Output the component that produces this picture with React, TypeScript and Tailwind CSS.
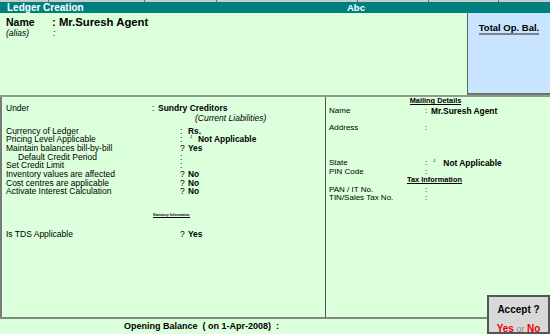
import React from "react";

const font = "font-['Liberation_Sans',Arial,sans-serif]";

function Row({ label, mark, value, indent }: { label: string; mark?: string; value?: React.ReactNode; indent?: boolean }) {
  return (
    <div className="flex h-[8.7px] items-center leading-none">
      <span className={`w-[174px] shrink-0 ${indent ? "pl-[12px]" : ""}`}>{label}</span>
      <span className="w-[8px] shrink-0">{mark}</span>
      {value && <span className="font-bold text-[8.4px]">{value}</span>}
    </div>
  );
}

function RightRow({ label, value, mark = ":", className = "" }: { label: string; value?: React.ReactNode; mark?: string; className?: string }) {
  return (
    <div className={`flex h-[8.4px] items-center leading-none ${className}`}>
      <span className="w-[96px] shrink-0">{label}</span>
      <span className="w-[6px] shrink-0">{mark}</span>
      {value && <span className="font-bold text-[8.4px]">{value}</span>}
    </div>
  );
}

function Hook({ children }: { children: React.ReactNode }) {
  return (
    <>
      <span className="inline-block w-[10px] pl-[2px] text-[6px] font-normal align-top">ᴶ</span>
      {children}
    </>
  );
}

export default function App() {
  const ticks = [48, 144, 216, 357, 428, 498];
  return (
    <div className={`relative h-[334px] w-[550px] overflow-hidden bg-[#dcffdc] text-black ${font}`}>
      {/* window strip */}
      <div className="relative h-[2px] bg-[#c8ccc8]">
        {ticks.map((x) => (
          <div key={x} className="absolute top-0 h-[2px] w-px bg-[#707070]" style={{ left: x }} />
        ))}
      </div>

      {/* title bar */}
      <div className="flex h-[11px] items-center bg-[#007f7f] text-[10px] font-bold leading-none text-white">
        <span className="w-[347px] shrink-0 pl-[7px]">Ledger Creation</span>
        <span className="text-[9.5px]">Abc</span>
      </div>

      {/* header section */}
      <div className="flex h-[82px]">
        <div className="flex-1 pl-[6px] pt-[4px]">
          <div className="flex h-[11px] items-center font-bold leading-none">
            <span className="w-[46px] text-[10.5px]">Name</span>
            <span className="text-[11.3px]">: Mr.Suresh Agent</span>
          </div>
          <div className="flex h-[11px] items-center text-[8.5px] italic leading-none">
            <span className="w-[47px]">(alias)</span>
            <span>:</span>
          </div>
        </div>
        <div className="w-[83px] border-b-2 border-l border-b-[#6c746c] border-l-[#5c645c] bg-[#c8e4ff] pt-[1px] text-center">
          <span className="inline-block border-b-2 border-[#7a8290] text-[9.5px] font-bold leading-[10px]">Total Op. Bal.</span>
        </div>
      </div>

      <div className="h-[2px] bg-[#8e9e8e]" />

      {/* body */}
      <div className="flex h-[220px] text-[8.5px]">
        <div className="w-[325px] shrink-0 border-l-2 border-[#7a7a7a] pl-[4px] pt-[7px]">
          <div className="flex h-[9px] items-center leading-none">
            <span className="w-[146px] shrink-0">Under</span>
            <span className="w-[6px] shrink-0">:</span>
            <span className="font-bold">Sundry Creditors</span>
          </div>
          <div className="flex h-[10px] items-center leading-none">
            <span className="w-[189px] shrink-0" />
            <span className="italic">(Current Liabilities)</span>
          </div>
          <div className="h-[3.5px]" />
          <Row label="Currency of Ledger" mark=":" value="Rs." />
          <Row label="Pricing Level Applicable" mark=":" value={<Hook>Not Applicable</Hook>} />
          <Row label="Maintain balances bill-by-bill" mark="?" value="Yes" />
          <Row label="Default Credit Period" mark=":" indent />
          <Row label="Set Credit Limit" mark=":" />
          <Row label="Inventory values are affected" mark="?" value="No" />
          <Row label="Cost centres are applicable" mark="?" value="No" />
          <Row label="Activate Interest Calculation" mark="?" value="No" />
          <div className="mt-[17px] flex h-[6px] items-center">
            <span className="ml-[147px] border-b border-black text-[3.6px] font-bold leading-none">Statutory Information</span>
          </div>
          <div className="mt-[11px]">
            <Row label="Is TDS Applicable" mark="?" value="Yes" />
          </div>
        </div>

        <div className="flex-1 border-l border-[#555] pl-[3px] text-[8px]">
          <div className="flex h-[8px] items-center justify-center pr-[8px] leading-none">
            <span className="border-b border-black text-[7.4px] font-bold">Mailing Details</span>
          </div>
          <RightRow label="Name" value="Mr.Suresh Agent" className="mt-[2px]" />
          <RightRow label="Address" className="mt-[8.6px]" />
          <RightRow label="State" value={<Hook>&nbsp;Not Applicable</Hook>} className="mt-[26.6px]" />
          <RightRow label="PIN Code" />
          <div className="flex h-[8px] items-center justify-center pr-[10px] leading-none">
            <span className="border-b border-black text-[7.4px] font-bold">Tax Information</span>
          </div>
          <RightRow label="PAN / IT No." className="mt-[1.6px]" />
          <RightRow label="TIN/Sales Tax No." />
        </div>
      </div>

      <div className="h-[2px] bg-[#7e8a7e]" />
      <div className="flex h-[14px] items-center pl-[124px] text-[9px] font-bold leading-none">
        Opening Balance&nbsp; ( on 1-Apr-2008)&nbsp; :
      </div>

      {/* accept prompt */}
      <div className="absolute bottom-0 right-0 flex h-[39px] w-[63px] flex-col items-center border-2 border-[#555] bg-[#d8d8d8] leading-none">
        <span className="mt-[8px] text-[10px] font-bold">Accept ?</span>
        <span className="mt-[9px] text-[10px]">
          <span className="font-bold text-[#f00000]">Yes</span>
          <span className="text-[9px] text-[#888]"> or </span>
          <span className="font-bold text-[#f00000]">No</span>
        </span>
      </div>
    </div>
  );
}
